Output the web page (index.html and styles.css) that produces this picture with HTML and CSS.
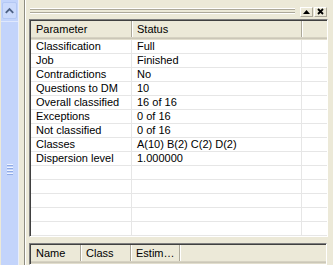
FILE: index.html
```html
<!DOCTYPE html>
<html>
<head>
<meta charset="utf-8">
<link rel="stylesheet" href="styles.css">
</head>
<body>
<div class="app">
  <div class="side">
    <div class="scroll">
      <div class="upbtn">
        <svg width="14" height="12" viewBox="0 0 14 12"><polyline points="3,8 7,4 11,8" fill="none" stroke="#4d6185" stroke-width="2"/></svg>
      </div>
      <div class="track">
        <div class="grip"><i></i><i></i><i></i><i></i></div>
      </div>
    </div>
    <div class="gap"></div>
    <div class="edge"></div>
  </div>
  <div class="panel">
    <div class="titlebar">
      <div class="lines"></div>
      <div class="tbtn">
        <svg width="11" height="9" viewBox="0 0 11 9"><polygon points="2,7 5.5,3 9,7" fill="#000"/></svg>
      </div>
      <div class="tbtn">
        <svg width="11" height="9" viewBox="0 0 11 9"><path d="M3 2 L8 7 M8 2 L3 7" stroke="#000" stroke-width="1.8"/></svg>
      </div>
    </div>
    <div class="grid top">
      <div class="head">
        <div class="hc c1">Parameter</div>
        <div class="hc c2">Status</div>
        <div class="hc c3"></div>
      </div>
      <div class="body">
        <div class="row"><div class="c c1">Classification</div><div class="c c2">Full</div><div class="c c3"></div></div>
        <div class="row"><div class="c c1">Job</div><div class="c c2">Finished</div><div class="c c3"></div></div>
        <div class="row"><div class="c c1">Contradictions</div><div class="c c2">No</div><div class="c c3"></div></div>
        <div class="row"><div class="c c1">Questions to DM</div><div class="c c2">10</div><div class="c c3"></div></div>
        <div class="row"><div class="c c1">Overall classified</div><div class="c c2">16 of 16</div><div class="c c3"></div></div>
        <div class="row"><div class="c c1">Exceptions</div><div class="c c2">0 of 16</div><div class="c c3"></div></div>
        <div class="row"><div class="c c1">Not classified</div><div class="c c2">0 of 16</div><div class="c c3"></div></div>
        <div class="row"><div class="c c1">Classes</div><div class="c c2">A(10) B(2) C(2) D(2)</div><div class="c c3"></div></div>
        <div class="row"><div class="c c1">Dispersion level</div><div class="c c2">1.000000</div><div class="c c3"></div></div>
        <div class="row"><div class="c c1"></div><div class="c c2"></div><div class="c c3"></div></div>
        <div class="row"><div class="c c1"></div><div class="c c2"></div><div class="c c3"></div></div>
        <div class="row"><div class="c c1"></div><div class="c c2"></div><div class="c c3"></div></div>
        <div class="row"><div class="c c1"></div><div class="c c2"></div><div class="c c3"></div></div>
        <div class="row"><div class="c c1"></div><div class="c c2"></div><div class="c c3"></div></div>
        <div class="row"><div class="c c1"></div><div class="c c2"></div><div class="c c3"></div></div>
      </div>
    </div>
    <div class="split"></div>
    <div class="grid bottom">
      <div class="head">
        <div class="hc b1">Name</div>
        <div class="hc b2">Class</div>
        <div class="hc b3">Estim…</div>
        <div class="hc b4"></div>
      </div>
      <div class="body"></div>
    </div>
  </div>
</div>
</body>
</html>
```

FILE: styles.css
```css
html, body {
  margin: 0;
  padding: 0;
}
body {
  width: 333px;
  height: 265px;
  overflow: hidden;
  background: #ece9d8;
  font-family: Tahoma, "Liberation Sans", Arial, sans-serif;
  font-size: 11px;
  color: #000;
}
.app {
  display: flex;
  height: 265px;
}
.side {
  display: flex;
  height: 265px;
}
.scroll {
  width: 17px;
  margin-left: 1px;
  background: #c3d4fb;
  border-right: 1px solid #e8eefc;
  display: flex;
  flex-direction: column;
}
.upbtn {
  height: 15px;
  margin: 2px 1px 0 1px;
  background: #cbdafc;
  border: 1px solid #b4c8f4;
  border-radius: 2px;
  display: flex;
  align-items: center;
  justify-content: center;
}
.track {
  flex: 1;
  margin-top: 2px;
  border-top: 1px solid #dfe8fd;
  display: flex;
  flex-direction: column;
  align-items: center;
  padding-top: 142px;
}
.grip {
  display: flex;
  flex-direction: column;
  gap: 1px;
}
.grip i {
  display: block;
  width: 6px;
  height: 1px;
  background: #eef3fe;
  border-bottom: 1px solid #8faae6;
}
.gap {
  width: 5px;
}
.edge {
  width: 1px;
  background: #8e8c80;
  border-right: 1px solid #fff;
}
.panel {
  flex: 1;
  display: flex;
  flex-direction: column;
  padding-left: 3px;
  padding-right: 5px;
}
.titlebar {
  height: 19px;
  display: flex;
  align-items: center;
  padding-left: 1px;
}
.lines {
  flex: 1;
  height: 4px;
  margin-top: 3px;
  border-top: 1px solid #fff;
  border-bottom: 1px solid #fff;
  box-shadow: inset 0 1px 0 #aca899, inset 0 -1px 0 #aca899;
  margin-right: 5px;
}
.tbtn {
  width: 11px;
  height: 8px;
  margin-top: 4px;
  margin-right: 1px;
  border: 1px solid #fff;
  border-right-color: #aca899;
  border-bottom-color: #aca899;
  display: flex;
  align-items: center;
  justify-content: center;
}
.tbtn svg {
  display: block;
}
.grid {
  background: #fff;
  border: 1px solid #7f7f7f;
  border-right-color: #fff;
  border-bottom-color: #fff;
  box-shadow: inset 1px 1px 0 #404040;
  overflow: hidden;
}
.top {
  height: 216px;
}
.head {
  display: flex;
  height: 16px;
  background: #ece9d8;
  border-bottom: 1px solid #d6d2c2;
  box-shadow: 0 1px 0 #cbc7b8, 0 2px 0 #e2decd;
  margin-left: 1px;
  margin-top: 1px;
  margin-bottom: 2px;
}
.hc {
  box-sizing: border-box;
  padding-left: 5px;
  line-height: 16px;
  white-space: nowrap;
  overflow: hidden;
  border-right: 1px solid #aca899;
  box-shadow: 1px 0 0 #fff;
}
.c1 { width: 101px; }
.c2 { width: 170px; }
.c3 { flex: 1; border-right: none; }
.row {
  display: flex;
  height: 13px;
  border-bottom: 1px solid #e6e6e6;
  margin-left: 1px;
}
.c {
  box-sizing: border-box;
  padding-left: 5px;
  line-height: 13px;
  white-space: nowrap;
  overflow: hidden;
  border-right: 1px solid #e6e6e6;
}
.row .c3 { border-right: none; }
.split {
  height: 6px;
}
.bottom {
  flex: 1;
  margin-right: 1px;
}
.b1 { width: 50px; }
.b2 { width: 50px; }
.b3 { width: 49px; }
.b4 { flex: 1; border-right: none; }
```
